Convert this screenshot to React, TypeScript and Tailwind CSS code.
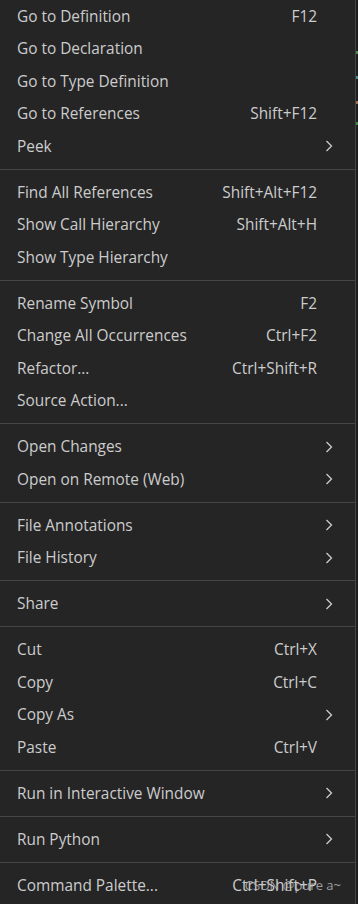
import React from "react";

type Item = { label: string; key?: string; sub?: boolean };

const groups: Item[][] = [
  [
    { label: "Go to Definition", key: "F12" },
    { label: "Go to Declaration" },
    { label: "Go to Type Definition" },
    { label: "Go to References", key: "Shift+F12" },
    { label: "Peek", sub: true },
  ],
  [
    { label: "Find All References", key: "Shift+Alt+F12" },
    { label: "Show Call Hierarchy", key: "Shift+Alt+H" },
    { label: "Show Type Hierarchy" },
  ],
  [
    { label: "Rename Symbol", key: "F2" },
    { label: "Change All Occurrences", key: "Ctrl+F2" },
    { label: "Refactor...", key: "Ctrl+Shift+R" },
    { label: "Source Action..." },
  ],
  [
    { label: "Open Changes", sub: true },
    { label: "Open on Remote (Web)", sub: true },
  ],
  [
    { label: "File Annotations", sub: true },
    { label: "File History", sub: true },
  ],
  [{ label: "Share", sub: true }],
  [
    { label: "Cut", key: "Ctrl+X" },
    { label: "Copy", key: "Ctrl+C" },
    { label: "Copy As", sub: true },
    { label: "Paste", key: "Ctrl+V" },
  ],
  [{ label: "Run in Interactive Window", sub: true }],
  [{ label: "Run Python", sub: true }],
  [{ label: "Command Palette...", key: "Ctrl+Shift+P" }],
];

function Chevron() {
  return (
    <svg width="10" height="14" viewBox="0 0 10 14" className="block">
      <polyline points="2.5,2 7.5,7 2.5,12" fill="none" stroke="#cccccc" strokeWidth="1.3" />
    </svg>
  );
}

export default function App() {
  return (
    <div className="w-[358px] h-[904px] bg-[#1e1e1e] flex overflow-hidden" style={{ fontFamily: '"Open Sans", "Noto Sans", sans-serif' }}>
      <div className="w-[356px] h-full bg-[#252526] border-r border-[#454545] flex flex-col text-[#cccccc] text-[15.4px] relative">
        {groups.map((g, gi) => (
          <React.Fragment key={gi}>
            {gi > 0 && (
              <div className="h-[13.5px] flex items-center">
                <div className="w-full h-px bg-[#454545]" />
              </div>
            )}
            {g.map((it, ii) => (
              <div key={ii} className="h-[32.5px] flex items-center pl-[17px] pr-[22px] relative">
                <span className="flex-1 whitespace-nowrap">{it.label}</span>
                {it.key && <span className="whitespace-nowrap mr-[16px]">{it.key}</span>}
                {it.sub && (
                  <span className="absolute right-[21px] top-1/2 -translate-y-1/2">
                    <Chevron />
                  </span>
                )}
              </div>
            ))}
          </React.Fragment>
        ))}
        <span className="absolute right-[14px] bottom-[9px] text-[13px] text-[#bdbdbd] opacity-80 whitespace-nowrap">CSDN @pure a~</span>
      </div>
      <div className="flex-1 relative">
        <div className="absolute top-[51px] left-0 w-[2px] h-[3px] bg-[#4e8a4e]" />
        <div className="absolute top-[76px] left-0 w-[2px] h-[3px] bg-[#4e8a8a]" />
        <div className="absolute top-[101px] left-0 w-[2px] h-[3px] bg-[#a0704e]" />
        <div className="absolute top-[122px] left-0 w-[2px] h-[3px] bg-[#3e8a3e]" />
      </div>
    </div>
  );
}
